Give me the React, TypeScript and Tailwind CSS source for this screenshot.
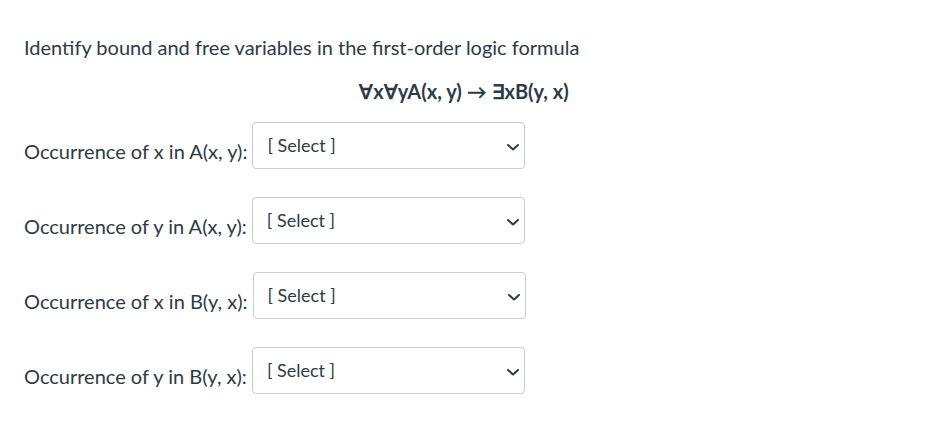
const rows = [
  'Occurrence of x in A(x, y):',
  'Occurrence of y in A(x, y):',
  'Occurrence of x in B(y, x):',
  'Occurrence of y in B(y, x):',
];

function FakeSelect() {
  return (
    <div className="relative w-[273px] h-[47px] border border-[#c7cdd1] rounded-[4px] bg-white">
      <span className="absolute left-[14px] top-[9px] text-[18px] leading-[26px] text-[#2d3b45]">[ Select ]</span>
      <svg
        className="absolute right-[5px] top-[21px]"
        width="12"
        height="7"
        viewBox="0 0 12 7"
        fill="none"
        stroke="#2d3b45"
        strokeWidth="2"
        strokeLinecap="round"
        strokeLinejoin="round"
      >
        <polyline points="1,1 6,5.5 11,1" />
      </svg>
    </div>
  );
}

export default function App() {
  return (
    <div className="w-[928px] h-[443px] bg-white text-[#2d3b45] font-['Lato',sans-serif] px-[24px] pt-[33px]">
      <p className="text-[20px] leading-[28px]">
        Identify bound and free variables in the first-order logic formula
      </p>
      <p className="mt-[16px] text-center font-bold text-[20px] leading-[28px]">
        ∀x∀yA(x, y) → ∃xB(y, x)
      </p>
      <div className="mt-[17px] flex flex-col gap-[28px]">
        {rows.map((label, i) => (
          <div key={i} className="flex items-start gap-[5px]">
            <span className="mt-[15px] text-[20px] leading-[28px]">{label}</span>
            <FakeSelect />
          </div>
        ))}
      </div>
    </div>
  );
}
